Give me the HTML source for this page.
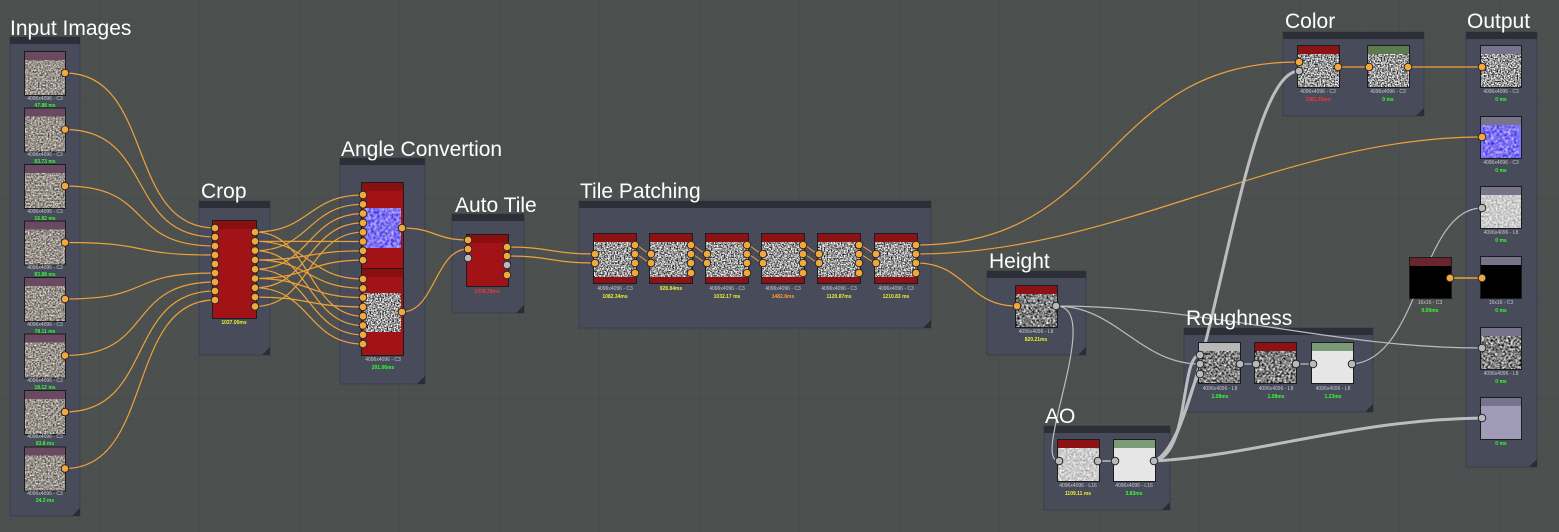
<!DOCTYPE html>
<html><head><meta charset="utf-8">
<style>
html,body{margin:0;padding:0;background:#4c5150;overflow:hidden}
svg{display:block}
.t{font-family:"Liberation Sans",sans-serif;font-size:21px;fill:#fff}
.s{font-family:"Liberation Sans",sans-serif;font-size:5px;fill:#c8c8d0;text-anchor:middle}
.g{font-family:"Liberation Sans",sans-serif;font-size:5px;font-weight:bold;fill:#3f3;text-anchor:middle}
.y{font-family:"Liberation Sans",sans-serif;font-size:5px;font-weight:bold;fill:#ee3;text-anchor:middle}
.r{font-family:"Liberation Sans",sans-serif;font-size:5px;font-weight:bold;fill:#f33;text-anchor:middle}
.o{font-family:"Liberation Sans",sans-serif;font-size:5px;font-weight:bold;fill:#f93;text-anchor:middle}
filter{color-interpolation-filters:sRGB}
</style></head><body>
<svg id="c" width="1559" height="532" viewBox="0 0 1559 532" xmlns="http://www.w3.org/2000/svg">
<defs>
<pattern id="grid" width="10" height="10" patternUnits="userSpaceOnUse"><path d="M10 0V10H0" fill="none" stroke="#474c4b" stroke-width="1"/></pattern>
<pattern id="grid2" width="100" height="100" patternUnits="userSpaceOnUse"><path d="M100 0V100H0" fill="none" stroke="#434847" stroke-width="1"/></pattern>
<filter id="n" x="0" y="0" width="1" height="1" color-interpolation-filters="sRGB"><feTurbulence type="fractalNoise" baseFrequency="0.7" numOctaves="2" seed="3"/><feColorMatrix type="matrix" values="2.2 0 0 0 -0.5  2.2 0 0 0 -0.5  2.2 0 0 0 -0.5  0 0 0 0 1"/></filter>
<filter id="nd" x="0" y="0" width="1" height="1" color-interpolation-filters="sRGB"><feTurbulence type="fractalNoise" baseFrequency="0.45" numOctaves="2" seed="7"/><feColorMatrix type="matrix" values="1.6 0 0 0 -0.3  1.6 0 0 0 -0.3  1.6 0 0 0 -0.3  0 0 0 0 1"/></filter>
<filter id="nl" x="0" y="0" width="1" height="1" color-interpolation-filters="sRGB"><feTurbulence type="fractalNoise" baseFrequency="0.6" numOctaves="2" seed="5"/><feColorMatrix type="matrix" values="1.2 0 0 0 0.0  1.15 0 0 0 0.0  1.1 0 0 0 0.0  0 0 0 0 1"/></filter>
<filter id="nw" x="0" y="0" width="1" height="1" color-interpolation-filters="sRGB"><feTurbulence type="fractalNoise" baseFrequency="0.5" numOctaves="2" seed="5"/><feColorMatrix type="matrix" values="0.6 0 0 0 0.5  0.6 0 0 0 0.5  0.6 0 0 0 0.5  0 0 0 0 1"/></filter>
<filter id="nb" x="0" y="0" width="1" height="1" color-interpolation-filters="sRGB"><feTurbulence type="fractalNoise" baseFrequency="0.35" numOctaves="2" seed="9"/><feColorMatrix type="matrix" values="1.0 0 0 0 0.0  0.9 0 0 0 0.0  0 0 0 0 0.95  0 0 0 0 1"/></filter>
</defs>
<rect width="1559" height="532" fill="#4c5150"/>
<rect width="1559" height="532" fill="url(#grid)"/>
<rect width="1559" height="532" fill="url(#grid2)"/>
<g id="frames"></g>
<g id="wires" fill="none"></g>
<g id="nodes"></g>
<g id="ports"></g>

<text class="t" x="10" y="35">Input Images</text>
<text class="t" x="201" y="198">Crop</text>
<text class="t" x="341" y="156">Angle Convertion</text>
<text class="t" x="455" y="212">Auto Tile</text>
<text class="t" x="580" y="198">Tile Patching</text>
<text class="t" x="989" y="268">Height</text>
<text class="t" x="1186" y="325">Roughness</text>
<text class="t" x="1045" y="423">AO</text>
<text class="t" x="1285" y="28">Color</text>
<text class="t" x="1467" y="28">Output</text>

<g>
<text class="s" x="45" y="100">4096x4096 - C3</text><text class="g" x="45" y="107">47.88 ms</text>
<text class="s" x="45" y="156">4096x4096 - C3</text><text class="g" x="45" y="163">83.73 ms</text>
<text class="s" x="45" y="213">4096x4096 - C3</text><text class="g" x="45" y="220">16.82 ms</text>
<text class="s" x="45" y="269">4096x4096 - C3</text><text class="g" x="45" y="276">83.88 ms</text>
<text class="s" x="45" y="326">4096x4096 - C3</text><text class="g" x="45" y="333">78.11 ms</text>
<text class="s" x="45" y="382">4096x4096 - C3</text><text class="g" x="45" y="389">18.12 ms</text>
<text class="s" x="45" y="438">4096x4096 - C3</text><text class="g" x="45" y="445">83.8 ms</text>
<text class="s" x="45" y="495">4096x4096 - C3</text><text class="g" x="45" y="502">24.3 ms</text>
<text class="y" x="234" y="324">1037.00ms</text>
<text class="s" x="383" y="361">4096x4096 - C3</text><text class="g" x="383" y="369">201.06ms</text>
<text class="r" x="487" y="293">1378.78ms</text>
<text class="s" x="615" y="290">4096x4096 - C3</text><text class="y" x="615" y="298">1082.34ms</text>
<text class="y" x="671" y="290">928.84ms</text>
<text class="s" x="727" y="290">4096x4096 - C3</text><text class="y" x="727" y="298">1032.17 ms</text>
<text class="s" x="783" y="290">4096x4096 - C3</text><text class="o" x="783" y="298">1482.8ms</text>
<text class="s" x="839" y="290">4096x4096 - C3</text><text class="y" x="839" y="298">1120.87ms</text>
<text class="s" x="896" y="290">4096x4096 - C3</text><text class="y" x="896" y="298">1210.83 ms</text>
<text class="s" x="1036" y="333">4096x4096 - L8</text><text class="y" x="1036" y="341">820.21ms</text>
<text class="s" x="1220" y="390">4096x4096 - L8</text><text class="g" x="1220" y="398">1.08ms</text>
<text class="s" x="1276" y="390">4096x4096 - L8</text><text class="g" x="1276" y="398">1.08ms</text>
<text class="s" x="1333" y="390">4096x4096 - L8</text><text class="g" x="1333" y="398">1.23ms</text>
<text class="s" x="1078" y="487">4096x4096 - L16</text><text class="y" x="1078" y="495">1109.11 ms</text>
<text class="s" x="1134" y="487">4096x4096 - L16</text><text class="g" x="1134" y="495">3.83ms</text>
<text class="s" x="1318" y="93">4096x4096 - C3</text><text class="r" x="1318" y="101">3381.33ms</text>
<text class="s" x="1388" y="93">4096x4096 - C3</text><text class="g" x="1388" y="101">0 ms</text>
<text class="s" x="1501" y="93">4096x4096 - C3</text><text class="g" x="1501" y="101">0 ms</text>
<text class="s" x="1501" y="164">4096x4096 - C3</text><text class="g" x="1501" y="172">0 ms</text>
<text class="s" x="1501" y="234">4096x4096 - L8</text><text class="g" x="1501" y="242">0 ms</text>
<text class="s" x="1501" y="304">16x16 - C3</text><text class="g" x="1501" y="312">0 ms</text>
<text class="s" x="1501" y="375">4096x4096 - L8</text><text class="g" x="1501" y="383">0 ms</text>
<text class="g" x="1501" y="445">0 ms</text>
<text class="s" x="1430" y="304">16x16 - C3</text><text class="g" x="1430" y="312">0.00ms</text>
</g>
</svg>
<script>
var NS="http://www.w3.org/2000/svg";
function el(p,t,a){var e=document.createElementNS(NS,t);for(var k in a)e.setAttribute(k,a[k]);document.getElementById(p).appendChild(e);return e;}
function frame(x1,y1,x2,y2){
 el("frames","rect",{x:x1,y:y1,width:x2-x1,height:y2-y1,fill:"#474b5a",stroke:"#3b3e49"});
 el("frames","rect",{x:x1,y:y1,width:x2-x1,height:7,fill:"#2c2f37"});
 el("frames","path",{d:"M"+x2+" "+(y2-8)+"L"+x2+" "+y2+"L"+(x2-8)+" "+y2+"Z",fill:"#2a2d33"});
}
frame(10,37,80,516);frame(199,201,270,355);frame(340,158,425,384);frame(452,214,524,313);
frame(579,201,931,328);frame(987,271,1086,355);frame(1184,328,1373,412);frame(1044,426,1170,510);
frame(1283,32,1424,116);frame(1466,32,1537,467);
function node(x,y,w,h,top,body,bot){
 el("nodes","rect",{x:x-1,y:y-1,width:w+2,height:h+2,fill:"#1c1c1e"});
 if(body.charAt(0)=="#")el("nodes","rect",{x:x,y:y,width:w,height:h,fill:body});
 else el("nodes","rect",{x:x,y:y,width:w,height:h,fill:"#888",filter:"url(#"+body+")"});
 if(top)el("nodes","rect",{x:x,y:y,width:w,height:8,fill:top});
 if(bot)el("nodes","rect",{x:x,y:y+h-6,width:w,height:6,fill:bot});
}
function port(x,y,gr){el("ports","circle",{cx:x,cy:y,r:3.8,fill:gr?"#b9b9b9":"#f2a83a",stroke:"#26262a","stroke-width":1});}
function wire(x1,y1,x2,y2,col,w,d){d=d||Math.max(30,(x2-x1)/2);el("wires","path",{d:"M"+x1+" "+y1+"C"+(x1+d)+" "+y1+" "+(x2-d)+" "+y2+" "+x2+" "+y2,stroke:col,"stroke-width":w||1.2});}
function wp(d,col,w){el("wires","path",{d:d,stroke:col,"stroke-width":w});}
var OR="#eea13a",GR="#bdbdbd";
var cropL=[],cropR=[],angL=[];
for(var i=0;i<9;i++){cropL.push(228+9*i);cropR.push(232+9.3*i);}
for(var i=0;i<8;i++)angL.push(195+9.3*i);
for(var i=0;i<8;i++)angL.push(279+9.3*i);
for(var i=0;i<8;i++){var y=52+56.5*i;node(25,y,40,43,"#6a4a60","nl");port(65,y+21);wire(65,y+21,215,cropL[i]+(i>3?9:0),OR,1.2,90);}
node(213,221,43,97,"#8a1010","#a21318");
for(var i=0;i<9;i++){port(215,cropL[i]);port(255,cropR[i]);}
var map=[0,8,1,9,2,10,3,11,4,12,5,13,6,14,7,15];
for(var i=0;i<16;i++){wire(255,cropR[i%9],363,angL[map[i]],OR,1.2,55);}
node(362,183,41,85,"#8a1010","#a21318");el("nodes","rect",{x:364,y:208,width:37,height:40,fill:"#77f",filter:"url(#nb)"});
node(362,269,41,86,"#8a1010","#a21318");el("nodes","rect",{x:364,y:293,width:37,height:39,fill:"#888",filter:"url(#n)"});
for(var i=0;i<16;i++)port(363,angL[i]);
port(402,228);port(402,312);
wire(402,228,468,240,OR);wire(402,312,468,249,OR);
node(467,235,41,51,"#8a1010","#a21318");
port(468,240);port(468,249);port(468,258,1);port(507,247);port(507,256);port(507,265,1);port(507,275);
wire(507,247,595,254,OR);wire(507,256,595,263,OR);
var tx=[594,650,706,762,818,875];
for(var i=0;i<6;i++){var x=tx[i];node(x,234,42,49,"#8c1215","n","#8c1215");port(x+1,254);port(x+1,263);port(x+41,245);port(x+41,254);port(x+41,263);port(x+41,273);
 if(i<5){wire(x+41,245,tx[i+1]+1,254,OR,1,4);wire(x+41,254,tx[i+1]+1,263,OR,1,4);}}
wire(916,245,1299,62,OR,1.2,200);wire(916,254,1482,137,OR,1.2,200);wire(916,263,1017,306,OR,1.2,50);
node(1016,286,41,41,"#8c1215","nd");port(1017,306);port(1056,306,1);
wire(1056,306,1200,364,GR,1.2,60);wire(1056,306,1482,348,GR,1.2,150);
wp("M1056 306C1105 306 1030 461 1059 461",GR,1.2);
node(1058,440,41,41,"#8c1215","nw");node(1114,440,41,41,"#7a9a78","#e6e6e6");
port(1059,461,1);port(1098,461,1);port(1115,461,1);port(1154,461,1);wire(1098,461,1115,461,GR,1.5);
wp("M1154 461C1190 455 1180 355 1200 355",GR,3);wp("M1154 461C1180 455 1190 380 1200 374",GR,3);
wp("M1154 461C1210 440 1240 71 1299 71",GR,3);wp("M1154 461C1260 455 1350 420 1482 418",GR,3);
node(1199,343,41,40,"#b8b8b8","nd");node(1255,343,41,40,"#8c1215","nd");node(1312,343,41,40,"#7a9a78","#e6e6e6");
port(1200,355,1);port(1200,364,1);port(1200,374,1);port(1240,364,1);port(1256,364,1);port(1296,364,1);port(1313,364,1);port(1352,364,1);
wire(1240,364,1256,364,GR);wire(1296,364,1313,364,GR);
wp("M1352 364C1420 360 1420 208 1482 208",GR,1.2);
node(1298,46,41,41,"#8c1215","n");node(1368,46,41,41,"#5d7a50","n");
port(1299,62);port(1299,71,1);port(1338,67);port(1369,67);port(1408,67);
wire(1338,67,1369,67,OR);wire(1408,67,1482,67,OR);
var oy=[46,117,187,257,328,398],ob=["n","#77f","nw","#000","nd","#a09cb8"];
for(var i=0;i<6;i++){node(1481,oy[i],40,41,"#77738a",ob[i]);}
el("nodes","rect",{x:1483,y:125,width:36,height:33,fill:"#77f",filter:"url(#nb)"});
port(1482,67);port(1482,137);port(1482,208,1);port(1482,278);port(1482,348,1);port(1482,418,1);
node(1410,258,41,40,"#6a2430","#000");port(1450,278);wire(1450,278,1482,278,OR,1.5);
</script>
</body></html>
